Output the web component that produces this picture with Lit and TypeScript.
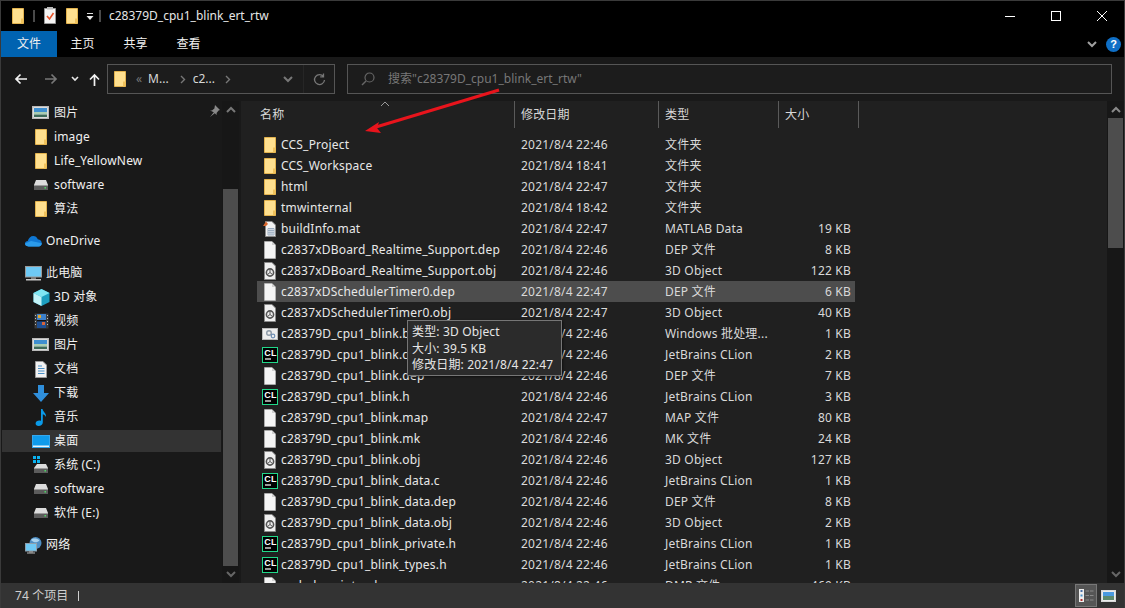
import { LitElement, html, css, svg } from 'lit';
import { customElement } from 'lit/decorators.js';

const ic = (w: number, h: number, body: unknown) =>
  html`<svg class="ic" width=${w} height=${h} viewBox="0 0 ${w} ${h}">${body}</svg>`;

const folder = () =>
  ic(16, 18, svg`<path d="M2.5 1.5H13.5V16.5H2.5Z" fill="#ffe08f" stroke="#e3b34e"/><path d="M11 16.5V11.5H13.5V16.5Z" fill="#f0c25c"/>`);

const page = () =>
  ic(16, 18, svg`<path d="M2.5 .5H10L13.5 4V17.5H2.5Z" fill="#f4f4f4" stroke="#bdbdbd" stroke-width=".6"/><path d="M10 .5V4H13.5Z" fill="#cfcfcf"/>`);

const obj = () =>
  ic(16, 18, svg`<path d="M2.5 .5H10L13.5 4V17.5H2.5Z" fill="#f0f0f0" stroke="#8a8a8a"/><circle cx="8" cy="10.5" r="3.6" fill="none" stroke="#555" stroke-width="1.6"/><path d="M8 7.5V10.5L5.5 12.5M8 10.5L10.5 12.5" stroke="#555" fill="none"/>`);

const clion = () =>
  ic(16, 18, svg`<rect x=".5" y="1.5" width="15" height="15" fill="#000" stroke="#21d789"/><text x="2.2" y="10" font-size="9" font-weight="700" fill="#fff" font-family="Liberation Sans">CL</text><rect x="3" y="12.4" width="6" height="1.2" fill="#fff"/>`);

const bat = () =>
  ic(16, 18, svg`<rect x=".5" y="3.5" width="15" height="11" fill="#eeeeee" stroke="#bbb"/><circle cx="7" cy="8" r="2.3" fill="none" stroke="#8d9aa8" stroke-width="1.4"/><circle cx="11" cy="11" r="1.8" fill="none" stroke="#6f8fb5" stroke-width="1.2"/>`);

const mat = () =>
  ic(16, 18, svg`<path d="M3.5 1.5H10L13.5 5V16.5H3.5Z" fill="#f2f2f2" stroke="#8a8a8a"/><path d="M1 6L4 1.5L6 4L4 6Z" fill="#d9662c"/><path d="M6 8.5H12V15H6ZM6 10.6H12M6 12.8H12M8 8.5V15M10 8.5V15" fill="#fff" stroke="#7d93ac" stroke-width=".7"/>`);

const picture = () =>
  ic(18, 14, svg`<rect x=".75" y=".75" width="15.5" height="11.5" fill="#fff" stroke="#b9b9b9" stroke-width="1.5"/><rect x="2" y="2" width="13" height="4" fill="#3f8fd0"/><rect x="2" y="6" width="13" height="2.5" fill="#a9cdb2"/><rect x="2" y="8.5" width="13" height="2.5" fill="#3d6a5a"/>`);

const drive = () =>
  ic(16, 12, svg`<path d="M3 1H13L15 6V10.5H1V6Z" fill="#dcdcdc"/><rect x="1" y="6" width="14" height="5" fill="#5c5c5c"/><rect x="1" y="6" width="14" height="1" fill="#9a9a9a"/><rect x="11.5" y="8" width="1.5" height="1.5" fill="#4cd964"/>`);

const cDrive = () =>
  ic(16, 18, svg`<path d="M0 0H3V3H0ZM4 0H7V3H4ZM0 4H3V7H0ZM4 4H7V7H4Z" fill="#0ab2f0"/><path d="M4 8H13L15 12V16.5H1V12Z" fill="#dcdcdc"/><rect x="1" y="12" width="14" height="5" fill="#5c5c5c"/><rect x="1" y="12" width="14" height="1" fill="#9a9a9a"/><rect x="11.5" y="14" width="1.5" height="1.5" fill="#4cd964"/>`);

const cloud = () =>
  ic(17, 12, svg`<path d="M3.5 11.5C1 11.5 0 9.8 0 8.6C0 7 1.3 6 2.8 6C3.5 3 5.8 1 8.2 1C10.4 1 12 2.2 12.8 4.3C15.2 4.5 16.8 6.2 16.8 8.3C16.8 10.2 15.4 11.5 13.6 11.5Z" fill="#0f78d4"/><path d="M3.5 11.5C1 11.5 0 9.8 0 8.6L6 6L16.8 8.3C16.8 10.2 15.4 11.5 13.6 11.5Z" fill="#2b9bea"/>`);

const monitor = () =>
  ic(17, 15, svg`<rect x=".5" y=".5" width="16" height="10.5" fill="#6ec9f5" stroke="#9a9a9a"/><rect x="6" y="11" width="5" height="2" fill="#7f7f7f"/><rect x="1" y="13" width="15" height="1.5" fill="#c8c8c8"/>`);

const cube = () =>
  ic(17, 17, svg`<path d="M8.5 0L16.5 4V13L8.5 17L.5 13V4Z" fill="#1d9fc0"/><path d="M8.5 0L16.5 4L8.5 8L.5 4Z" fill="#7fe6f3"/><path d="M.5 4L8.5 8V17L.5 13Z" fill="#c2f3f8"/>`);

const film = () =>
  ic(15, 16, svg`<rect x=".5" y=".5" width="14" height="15" fill="#3a3a3a"/><path d="M3 1H12V15H3Z" fill="#1e4f92"/><path d="M3 1H12V7H3Z" fill="#3d80c9"/><rect x="4" y="2" width="3" height="3" fill="#e3a52b"/><rect x="8" y="9" width="3" height="3" fill="#d9643a"/><rect x="3" y="7" width="9" height="1.4" fill="#111"/><path d="M1 2H2V3H1ZM1 5H2V6H1ZM1 8H2V9H1ZM1 11H2V12H1ZM13 2H14V3H13ZM13 5H14V6H13ZM13 8H14V9H13ZM13 11H14V12H13Z" fill="#bbb"/>`);

const doc = () =>
  ic(14, 17, svg`<path d="M1.5 .5H9L12.5 4V16.5H1.5Z" fill="#f2f2f2" stroke="#9a9a9a"/><path d="M4 5H8M4 7.5H10.5M4 10H10.5M4 12.5H10.5" stroke="#4a90c8" stroke-width="1.1"/>`);

const download = () =>
  ic(16, 17, svg`<path d="M5 0H11V8H16L8 17L0 8H5Z" fill="#2f8fdc"/>`);

const note = () =>
  ic(13, 17, svg`<path d="M6 0H7.5C8 3 11.5 4 11 8C10 6 8.6 5.4 7.8 5.2V13.5C7.8 15.6 5.8 17 3.6 17C1.6 17 .6 15.8 .6 14.6C.6 12.9 2.4 11.6 4.4 11.6C5 11.6 5.6 11.7 6 11.9Z" fill="#0a9ae8"/>`);

const desktop = () =>
  ic(18, 13, svg`<rect x=".5" y=".5" width="17" height="12" fill="#0f9bec"/><rect x=".5" y="10.5" width="17" height="2" fill="#e8f4fb"/><rect x=".5" y=".5" width="17" height="12" fill="none" stroke="#35a8ee"/>`);

const network = () =>
  ic(17, 17, svg`<circle cx="10.5" cy="6" r="6" fill="#4f8fc4"/><path d="M6 3C8 1 12 1 14.5 3.5C12 6 9 6 6 3Z" fill="#a9d3ef"/><rect x=".5" y="6.5" width="11" height="7.5" fill="#6ec9f5" stroke="#8fa0ad"/><rect x="4" y="14" width="4" height="1.5" fill="#8a8a8a"/><rect x="2" y="15.5" width="8" height="1" fill="#bdbdbd"/>`);

const crumbArrow = () =>
  ic(6, 9, svg`<path d="M1 1L4.5 4.5L1 8" fill="none" stroke="#777" stroke-width="1.4"/>`);

const TYPE_ICONS: Record<string, () => unknown> = { folder, page, obj, clion, bat, mat };

// name, icon, date, type, size
const FILES: [string, string, string, string, string][] = [
  ['CCS_Project', 'folder', '2021/8/4 22:46', '文件夹', ''],
  ['CCS_Workspace', 'folder', '2021/8/4 18:41', '文件夹', ''],
  ['html', 'folder', '2021/8/4 22:47', '文件夹', ''],
  ['tmwinternal', 'folder', '2021/8/4 18:42', '文件夹', ''],
  ['buildInfo.mat', 'mat', '2021/8/4 22:47', 'MATLAB Data', '19 KB'],
  ['c2837xDBoard_Realtime_Support.dep', 'page', '2021/8/4 22:46', 'DEP 文件', '8 KB'],
  ['c2837xDBoard_Realtime_Support.obj', 'obj', '2021/8/4 22:46', '3D Object', '122 KB'],
  ['c2837xDSchedulerTimer0.dep', 'page', '2021/8/4 22:47', 'DEP 文件', '6 KB'],
  ['c2837xDSchedulerTimer0.obj', 'obj', '2021/8/4 22:47', '3D Object', '40 KB'],
  ['c28379D_cpu1_blink.bat', 'bat', '2021/8/4 22:46', 'Windows 批处理...', '1 KB'],
  ['c28379D_cpu1_blink.c', 'clion', '2021/8/4 22:46', 'JetBrains CLion', '2 KB'],
  ['c28379D_cpu1_blink.dep', 'page', '2021/8/4 22:46', 'DEP 文件', '7 KB'],
  ['c28379D_cpu1_blink.h', 'clion', '2021/8/4 22:46', 'JetBrains CLion', '3 KB'],
  ['c28379D_cpu1_blink.map', 'page', '2021/8/4 22:47', 'MAP 文件', '80 KB'],
  ['c28379D_cpu1_blink.mk', 'page', '2021/8/4 22:46', 'MK 文件', '24 KB'],
  ['c28379D_cpu1_blink.obj', 'obj', '2021/8/4 22:46', '3D Object', '127 KB'],
  ['c28379D_cpu1_blink_data.c', 'clion', '2021/8/4 22:46', 'JetBrains CLion', '1 KB'],
  ['c28379D_cpu1_blink_data.dep', 'page', '2021/8/4 22:46', 'DEP 文件', '8 KB'],
  ['c28379D_cpu1_blink_data.obj', 'obj', '2021/8/4 22:46', '3D Object', '2 KB'],
  ['c28379D_cpu1_blink_private.h', 'clion', '2021/8/4 22:46', 'JetBrains CLion', '1 KB'],
  ['c28379D_cpu1_blink_types.h', 'clion', '2021/8/4 22:46', 'JetBrains CLion', '1 KB'],
  ['codedescriptor.dmr', 'page', '2021/8/4 22:46', 'DMR 文件', '469 KB'],
];

// label, icon, indent level, starts a group, selected
const NAV: [string, () => unknown, number, boolean, boolean][] = [
  ['图片', picture, 1, false, false],
  ['image', folder, 1, false, false],
  ['Life_YellowNew', folder, 1, false, false],
  ['software', drive, 1, false, false],
  ['算法', folder, 1, false, false],
  ['OneDrive', cloud, 0, true, false],
  ['此电脑', monitor, 0, true, false],
  ['3D 对象', cube, 1, false, false],
  ['视频', film, 1, false, false],
  ['图片', picture, 1, false, false],
  ['文档', doc, 1, false, false],
  ['下载', download, 1, false, false],
  ['音乐', note, 1, false, false],
  ['桌面', desktop, 1, false, true],
  ['系统 (C:)', cDrive, 1, false, false],
  ['software', drive, 1, false, false],
  ['软件 (E:)', drive, 1, false, false],
  ['网络', network, 0, true, false],
];

const chevUp = (c = '#8a8a8a') =>
  ic(10, 7, svg`<path d="M1 6L5 2L9 6" fill="none" stroke=${c} stroke-width="2"/>`);
const chevDown = (c = '#8a8a8a') =>
  ic(10, 7, svg`<path d="M1 1L5 5L9 1" fill="none" stroke=${c} stroke-width="2"/>`);

@customElement('app-root')
export class AppRoot extends LitElement {
  static styles = css`
    :host {
      display: block;
      position: relative;
      width: 1125px;
      height: 608px;
      overflow: hidden;
      background: #000;
      color: #f0f0f0;
      font: 12px/16px 'Noto Sans', 'Noto Sans CJK SC', sans-serif;
    }
    .ic { display: block; flex: none; }
    .window {
      height: 608px;
      box-sizing: border-box;
      display: flex;
      flex-direction: column;
      border: 1px solid #3a3a3a;
      border-bottom: 0;
    }

    .titlebar {
      height: 30px;
      display: flex;
      align-items: center;
      padding-left: 9px;
      background: #000;
    }
    .tb-sep { width: 2px; height: 12px; background: #4a4a4a; margin: 0 7px; }
    .tb-sep.last { margin: 0 6px 0 0; }
    .tb-gap { width: 6px; }
    .tb-drop { margin: 0 5px 0 6px; }
    .title { margin-left: 2px; color: #e6e6e6; }
    .controls { margin-left: auto; display: flex; align-items: center; padding-right: 16px; gap: 34px; }

    .ribbon { height: 26px; display: flex; align-items: stretch; background: #000; }
    .tab { width: 53px; display: flex; align-items: center; justify-content: center; }
    .tab.file { width: 56px; background: #0063b1; margin-right: -1px; }
    .ribbon-right { margin-left: auto; display: flex; align-items: center; gap: 9px; padding-right: 3px; }
    .help {
      width: 15px;
      height: 15px;
      border-radius: 50%;
      background: #0f6fc6;
      color: #fff;
      font: 700 11px/15px 'Liberation Sans', sans-serif;
      text-align: center;
    }

    .addr {
      height: 44px;
      background: #191919;
      display: flex;
      align-items: center;
      padding-left: 13px;
    }
    .nav-btns { display: flex; align-items: center; width: 93px; }
    .gap-16 { width: 16px; }
    .gap-13 { width: 13px; }
    .gap-9 { width: 9px; }
    .field {
      height: 30px;
      box-sizing: border-box;
      border: 1px solid #555;
      background: #1c1c1c;
      display: flex;
      align-items: center;
    }
    .path { width: 228px; padding-left: 4px; color: #d8d8d8; }
    .crumbs { display: flex; align-items: center; flex: 1; height: 100%; }
    .dbl { color: #777; margin: 0 6px 0 8px; }
    .arr1 { margin: 0 7px 0 11px; }
    .arr2 { margin-left: 10px; }
    .sep-v { width: 31px; height: 100%; border-left: 1px solid #262626; display: flex; align-items: center; justify-content: center; box-sizing: border-box; }
    .chev-wrap { width: 12px; margin-right: 8px; }
    .search { width: 765px; margin-left: 12px; padding-left: 13px; gap: 13px; color: #777; }

    .main { flex: 1; min-height: 0; display: flex; }
    .sidebar { width: 240px; background: #191919; display: flex; flex: none; }
    .tree { width: 221px; flex: none; overflow: hidden; letter-spacing: .15px; }
    .nav-item {
      height: 24px;
      display: flex;
      align-items: center;
      color: #f0f0f0;
      position: relative;
    }
    .nav-item.group { margin-top: 8px; }
    .nav-item .slot { width: 20px; display: flex; justify-content: center; margin-right: 3px; }
    .nav-item.l0 { padding-left: 22px; }
    .nav-item.l1 { padding-left: 30px; }
    .nav-item.sel { background: #333; margin: 1px 1px 1px 1px; padding-left: 29px; height: 22px; }
    .pin { position: absolute; right: 2px; top: 4px; }

    .vbar { background: #171717; display: flex; flex-direction: column; flex: none; width: 17px; }
    .vbar .btn { height: 17px; display: flex; align-items: center; justify-content: center; }
    .thumb { background: #4d4d4d; margin: 0 1px; }
    .side-bar .thumb { margin-top: 71px; height: 378px; }
    .main-bar .thumb { height: 130px; }
    .spacer { flex: 1; }

    .content { flex: 1; min-width: 0; background: #202020; padding-left: 16px; overflow: hidden; position: relative; }
    .head { display: flex; height: 27px; position: relative; }
    .hcell {
      box-sizing: border-box;
      padding: 6px 0 0 6px;
      border-right: 1px solid #5a5a5a;
      color: #d8d8d8;
      letter-spacing: .15px;
    }
    .hcell.name { padding-left: 3px; width: 258px; border-right-color: #5a5a5a; }
    .hcell.date { width: 144px; }
    .hcell.type { width: 120px; }
    .hcell.size { width: 80px; }
    .caret { position: absolute; left: 123px; top: 0; }
    .rows { padding-top: 6px; letter-spacing: .2px; }
    .row {
      display: flex;
      height: 21px;
      width: 598px;
      align-items: center;
      white-space: nowrap;
      color: #d9d9d9;
    }
    .row.hl { background: #4d4d4d; }
    .c-name { width: 258px; display: flex; align-items: center; gap: 3px; padding-left: 5px; box-sizing: border-box; color: #e8e8e8; }
    .c-date { width: 144px; padding-left: 6px; box-sizing: border-box; }
    .c-type { width: 120px; padding-left: 6px; box-sizing: border-box; }
    .c-size { width: 76px; padding-right: 4px; text-align: right; box-sizing: border-box; }

    .status {
      height: 25px;
      flex: none;
      background: #333;
      display: flex;
      align-items: center;
      padding-left: 14px;
      color: #cfcfcf;
      letter-spacing: .1px;
    }
    .status .bar { width: 1px; height: 10px; background: #cfcfcf; margin-left: 10px; }
    .views { margin-left: auto; display: flex; align-items: center; padding-right: 8px; gap: 4px; }
    .view-on { width: 22px; height: 23px; box-sizing: border-box; border: 1px solid #777; background: #555; display: flex; align-items: center; justify-content: center; }

    .tooltip {
      position: absolute;
      left: 407px;
      top: 320px;
      width: 155px;
      height: 56px;
      box-sizing: border-box;
      padding: 3px 4px;
      background: #2b2b2b;
      border: 1px solid #767676;
      box-shadow: 1px 1px 2px #0008;
      color: #e6e6e6;
      white-space: nowrap;
      line-height: 16.6px;
      letter-spacing: .15px;
    }
    .arrow { position: absolute; left: 0; top: 0; pointer-events: none; }
  `;

  private renderFile(f: [string, string, string, string, string], i: number) {
    return html`<div class="row ${i === 7 ? 'hl' : ''}">
      <div class="c-name">${TYPE_ICONS[f[1]]()}<span>${f[0]}</span></div>
      <div class="c-date">${f[2]}</div>
      <div class="c-type">${f[3]}</div>
      <div class="c-size">${f[4]}</div>
    </div>`;
  }

  render() {
    return html`
      <div class="window">
        <div class="titlebar">
          ${folder()}
          <div class="tb-sep"></div>
          ${ic(16, 18, svg`<path d="M2.5 1.5H13.5V16.5H2.5Z" fill="#f4f4f4" stroke="#999"/><rect x="5" y="0" width="6" height="2.5" fill="#bbb"/><path d="M5 9L7.5 12L11.5 6" fill="none" stroke="#e8542a" stroke-width="1.6"/>`)}
          <div class="tb-gap"></div>
          ${folder()}
          <div class="tb-drop">${ic(8, 9, svg`<rect x="1" y="1" width="6" height="1" fill="#ddd"/><path d="M.5 4H7.5L4 8Z" fill="#eee"/>`)}</div>
          <div class="tb-sep last"></div>
          <div class="title">c28379D_cpu1_blink_ert_rtw</div>
          <div class="controls">
            ${ic(12, 12, svg`<rect x="1" y="6" width="10" height="1" fill="#fff"/>`)}
            ${ic(12, 12, svg`<rect x="1.5" y="1.5" width="9" height="9" fill="none" stroke="#fff"/>`)}
            ${ic(12, 12, svg`<path d="M1 1L11 11M11 1L1 11" stroke="#fff" fill="none"/>`)}
          </div>
        </div>
        <div class="ribbon">
          <div class="tab file">文件</div>
          <div class="tab">主页</div>
          <div class="tab">共享</div>
          <div class="tab">查看</div>
          <div class="ribbon-right">
            ${chevDown('#a0a0a0')}
            <div class="help">?</div>
          </div>
        </div>
        <div class="addr">
          <div class="nav-btns">
            ${ic(14, 12, svg`<path d="M13 6H2M6.5 1.5L2 6L6.5 10.5" fill="none" stroke="#f2f2f2" stroke-width="1.7"/>`)}
            <div class="gap-16"></div>
            ${ic(14, 12, svg`<path d="M1 6H12M7.5 1.5L12 6L7.5 10.5" fill="none" stroke="#777" stroke-width="1.7"/>`)}
            <div class="gap-13"></div>
            ${ic(8, 6, svg`<path d="M1 1L4 4L7 1" fill="none" stroke="#e8e8e8" stroke-width="1.6"/>`)}
            <div class="gap-9"></div>
            ${ic(13, 13, svg`<path d="M6.5 13V2M2 6.5L6.5 2L11 6.5" fill="none" stroke="#f2f2f2" stroke-width="1.7"/>`)}
          </div>
          <div class="field path">
            <div class="crumbs">
              ${folder()}
              <span class="dbl">«</span>
              <span>M...</span>
              <span class="arr1">${crumbArrow()}</span>
              <span>c2...</span>
              <span class="arr2">${crumbArrow()}</span>
            </div>
            <div class="chev-wrap">${chevDown('#777')}</div>
            <div class="sep-v">
              ${ic(13, 13, svg`<path d="M10.5 3.5A5 5 0 1 0 11.5 7M10.5 .5V3.8H7.2" fill="none" stroke="#777" stroke-width="1.3"/>`)}
            </div>
          </div>
          <div class="field search">
            ${ic(14, 14, svg`<circle cx="8.5" cy="5.5" r="4.5" fill="none" stroke="#666" stroke-width="1.2"/><path d="M5 9L1 13" stroke="#666" stroke-width="1.4"/>`)}
            <span>搜索"c28379D_cpu1_blink_ert_rtw"</span>
          </div>
        </div>
        <div class="main">
          <div class="sidebar">
            <div class="tree">
              ${NAV.map(
                ([label, icon, lvl, group, sel], i) => html`<div
                  class="nav-item l${lvl} ${sel ? 'sel' : ''} ${group ? 'group' : ''}"
                >
                  <span class="slot">${icon()}</span><span>${label}</span>
                  ${i === 0
                    ? html`<span class="pin">${ic(12, 12, svg`<path d="M7 0L12 5L10.6 5.6L8.6 8L8.6 10L6.8 8.2L2 12L5.8 7.2L2 5.4L4 5.4L6.4 3.4Z" fill="#8a8a8a"/>`)}</span>`
                    : ''}
                </div>`,
              )}
            </div>
            <div class="vbar side-bar">
              <div class="btn">${chevUp('#777')}</div>
              <div class="thumb"></div>
              <div class="spacer"></div>
              <div class="btn">${chevDown('#666')}</div>
            </div>
          </div>
          <div class="content">
            <div class="head">
              <div class="hcell name">名称</div>
              <div class="hcell date">修改日期</div>
              <div class="hcell type">类型</div>
              <div class="hcell size">大小</div>
              <div class="caret">${ic(10, 6, svg`<path d="M1 5L5 1L9 5" fill="none" stroke="#999" stroke-width="1"/>`)}</div>
            </div>
            <div class="rows">${FILES.map((f, i) => this.renderFile(f, i))}</div>
          </div>
          <div class="vbar main-bar">
            <div class="btn">${chevUp('#8a8a8a')}</div>
            <div class="thumb"></div>
            <div class="spacer"></div>
            <div class="btn">${chevDown('#666')}</div>
          </div>
        </div>
        <div class="status">
          <span>74 个项目</span><span class="bar"></span>
          <div class="views">
            <div class="view-on">
              ${ic(16, 15, svg`<rect x="1" y="1" width="5" height="13" fill="#eee"/><rect x="2.5" y="2" width="2" height="2" fill="#4a6fa5"/><rect x="2.5" y="6.5" width="2" height="2" fill="#4a90c8"/><rect x="2.5" y="11" width="2" height="2" fill="#b02a2a"/><path d="M7.5 3H11M12 3H15.5M7.5 7.5H11M12 7.5H15.5M7.5 12H11M12 12H15.5" stroke="#8a8a8a"/>`)}
            </div>
            ${ic(15, 12, svg`<rect x=".75" y=".75" width="13.5" height="10.5" fill="#fff" stroke="#d8d8d8" stroke-width="1.5"/><rect x="2" y="2" width="11" height="4" fill="#4a9ae0"/><rect x="2" y="6" width="11" height="4" fill="#5d8a6e"/>`)}
          </div>
        </div>
      </div>
      <div class="tooltip">
        <div>类型: 3D Object</div>
        <div>大小: 39.5 KB</div>
        <div>修改日期: 2021/8/4 22:47</div>
      </div>
      <svg class="arrow" width="1125" height="608">
        <path d="M499 90L376 127" stroke="#e8141c" stroke-width="3" fill="none"/>
        <path d="M365 131L379 122L377 128L381 133Z" fill="#e8141c"/>
      </svg>
    `;
  }
}
